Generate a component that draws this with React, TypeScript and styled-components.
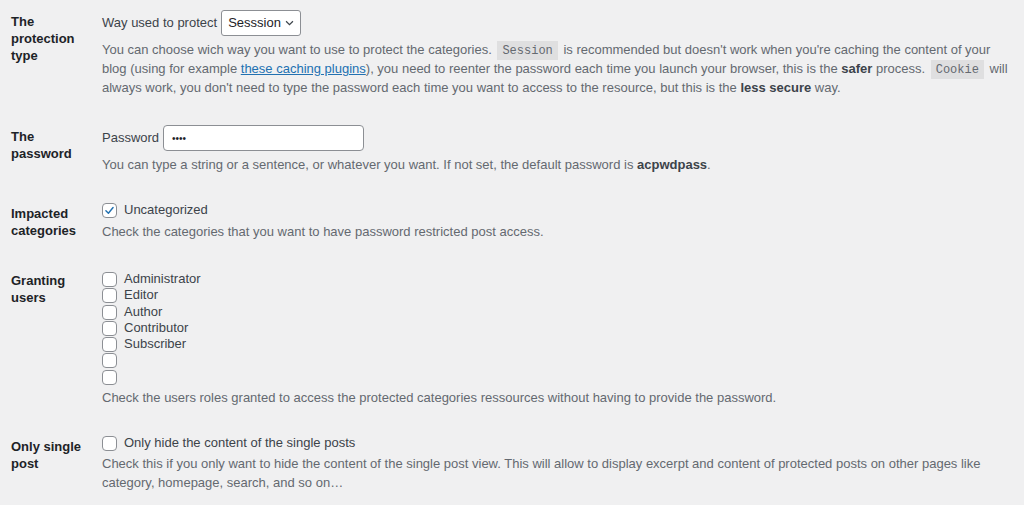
import { createGlobalStyle, styled } from "styled-components";

const GlobalStyle = createGlobalStyle`
  html, body {
    margin: 0;
    padding: 0;
    background: #f0f0f1;
    overflow: hidden;
  }
  body {
    font-family: "Liberation Sans", Arial, sans-serif;
    font-size: 13px;
    color: #3c434a;
  }
`;

const colors = {
  heading: "#1d2327",
  text: "#3c434a",
  muted: "#646970",
  border: "#8c8f94",
  link: "#2271b1",
};

// the screenshot crops the top few pixels of the settings table
const FormTable = styled.div`
  display: flex;
  flex-direction: column;
  margin-top: -4px;
`;

const Row = styled.div`
  display: flex;
  align-items: flex-start;
`;

const Th = styled.div`
  width: 71px;
  flex-shrink: 0;
  padding: 18px 10px 14px 11px;
  font-weight: 700;
  line-height: 1.3;
  color: ${colors.heading};
`;

const Td = styled.div`
  flex: 1;
  min-width: 0;
  padding: 14px 10px;
  line-height: 1.3;
`;

const Inline = styled.div`
  display: flex;
  align-items: center;
  gap: 4px;
  height: 26px;
`;

const SelectWrap = styled.div`
  position: relative;
  display: inline-flex;
`;

const Select = styled.select`
  appearance: none;
  box-sizing: border-box;
  height: 26px;
  width: 80px;
  padding: 0 18px 0 6px;
  font: inherit;
  color: ${colors.heading};
  background: #fff;
  border: 1px solid ${colors.border};
  border-radius: 3px;
`;

const Chevron = styled.svg`
  position: absolute;
  right: 7px;
  top: 10px;
  pointer-events: none;
`;

const PasswordInput = styled.input`
  box-sizing: border-box;
  width: 201px;
  height: 26px;
  padding: 0 8px;
  font: inherit;
  font-size: 10px;
  color: ${colors.heading};
  background: #fff;
  border: 1px solid ${colors.border};
  border-radius: 4px;
`;

const Description = styled.p<{ $gap?: number }>`
  margin: ${(p) => p.$gap ?? 4}px 0 0;
  line-height: 19px;
  color: ${colors.muted};
`;

const Code = styled.code`
  font-family: "Liberation Mono", monospace;
  font-size: 12px;
  line-height: 1;
  background: rgba(0, 0, 0, 0.07);
  padding: 3px 5px 2px;
  margin: 0 2px;
`;

const Link = styled.a`
  color: ${colors.link};
  text-decoration: underline;
`;

const Strong = styled.b`
  font-weight: 700;
  color: ${colors.text};
`;

const CheckList = styled.div<{ $offset?: number }>`
  display: flex;
  flex-direction: column;
  margin-top: ${(p) => p.$offset ?? 0}px;
`;

const CheckRow = styled.label`
  display: flex;
  align-items: center;
  gap: 7px;
  height: 16.3px;
  color: ${colors.text};
`;

const Box = styled.span`
  box-sizing: border-box;
  width: 15px;
  height: 15px;
  flex-shrink: 0;
  display: inline-flex;
  align-items: center;
  justify-content: center;
  background: #fff;
  border: 1px solid ${colors.border};
  border-radius: 4px;
`;

function Checkbox({ checked, label }: { checked?: boolean; label?: string }) {
  return (
    <CheckRow>
      <Box>
        {checked && (
          <svg width="11" height="11" viewBox="0 0 20 20">
            <path
              d="M3.5 10.5 L8 15 L16.5 4.5"
              fill="none"
              stroke={colors.link}
              strokeWidth="2.6"
              strokeLinecap="round"
              strokeLinejoin="round"
            />
          </svg>
        )}
      </Box>
      {label}
    </CheckRow>
  );
}

const roles = ["Administrator", "Editor", "Author", "Contributor", "Subscriber", "", ""];

export default function App() {
  return (
    <>
      <GlobalStyle />
      <FormTable>
        <Row>
          <Th>
            The
            <br />
            protection
            <br />
            type
          </Th>
          <Td>
            <Inline>
              Way used to protect
              <SelectWrap>
                <Select defaultValue="session">
                  <option value="session">Sesssion</option>
                  <option value="cookie">Cookie</option>
                </Select>
                <Chevron width="9" height="6" viewBox="0 0 10 7">
                  <path d="M1 1.5 L5 5.5 L9 1.5" fill="none" stroke={colors.text} strokeWidth="1.4" />
                </Chevron>
              </SelectWrap>
            </Inline>
            <Description>
              You can choose wich way you want to use to protect the categories. <Code>Session</Code> is
              recommended but doesn't work when you're caching the content of your blog (using for example{" "}
              <Link href="#">these caching plugins</Link>), you need to reenter the password each time you
              launch your browser, this is the <Strong>safer</Strong> process. <Code>Cookie</Code> will always
              work, you don't need to type the password each time you want to access to the resource, but this
              is the <Strong>less secure</Strong> way.
            </Description>
          </Td>
        </Row>

        <Row>
          <Th>
            The
            <br />
            password
          </Th>
          <Td>
            <Inline>
              Password
              <PasswordInput type="password" defaultValue="abcd" />
            </Inline>
            <Description>
              You can type a string or a sentence, or whatever you want. If not set, the default password is{" "}
              <Strong>acpwdpass</Strong>.
            </Description>
          </Td>
        </Row>

        <Row>
          <Th>
            Impacted
            <br />
            categories
          </Th>
          <Td>
            <CheckList>
              <Checkbox checked label="Uncategorized" />
            </CheckList>
            <Description>Check the categories that you want to have password restricted post access.</Description>
          </Td>
        </Row>

        <Row>
          <Th>
            Granting
            <br />
            users
          </Th>
          <Td>
            <CheckList $offset={2}>
              {roles.map((r, i) => (
                <Checkbox key={i} label={r} />
              ))}
            </CheckList>
            <Description $gap={3}>
              Check the users roles granted to access the protected categories ressources without having to
              provide the password.
            </Description>
          </Td>
        </Row>

        <Row>
          <Th>
            Only single
            <br />
            post
          </Th>
          <Td>
            <CheckList>
              <Checkbox label="Only hide the content of the single posts" />
            </CheckList>
            <Description $gap={2}>
              Check this if you only want to hide the content of the single post view. This will allow to
              display excerpt and content of protected posts on other pages like category, homepage, search,
              and so on…
            </Description>
          </Td>
        </Row>
      </FormTable>
    </>
  );
}
